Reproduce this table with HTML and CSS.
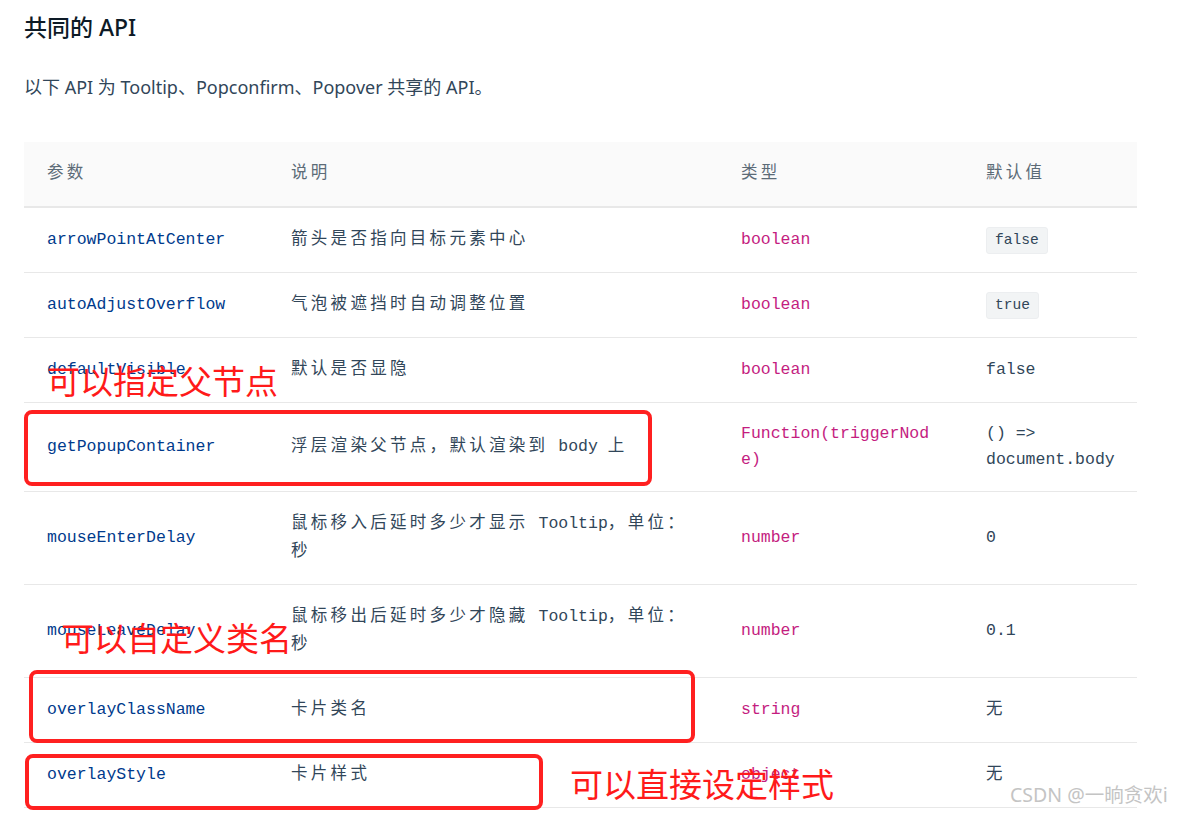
FILE: index.html
```html
<!DOCTYPE html>
<html lang="zh-CN">
<head>
<meta charset="utf-8">
<title>共同的 API</title>
<link rel="stylesheet" href="styles.css">
</head>
<body>
<div class="page">
  <h2 class="title">共同的 API</h2>
  <p class="intro">以下 API 为 Tooltip、Popconfirm、Popover 共享的 API。</p>

  <table class="api">
    <colgroup>
      <col class="c1"><col class="c2"><col class="c3"><col class="c4">
    </colgroup>
    <thead>
      <tr>
        <th><span class="zh">参数</span></th>
        <th><span class="zh">说明</span></th>
        <th><span class="zh">类型</span></th>
        <th><span class="zh">默认值</span></th>
      </tr>
    </thead>
    <tbody>
      <tr>
        <td class="name">arrowPointAtCenter</td>
        <td class="desc"><span class="zh">箭头是否指向目标元素中心</span></td>
        <td class="type">boolean</td>
        <td class="def"><code class="tag">false</code></td>
      </tr>
      <tr>
        <td class="name">autoAdjustOverflow</td>
        <td class="desc"><span class="zh">气泡被遮挡时自动调整位置</span></td>
        <td class="type">boolean</td>
        <td class="def"><code class="tag">true</code></td>
      </tr>
      <tr>
        <td class="name">defaultVisible</td>
        <td class="desc"><span class="zh">默认是否显隐</span></td>
        <td class="type">boolean</td>
        <td class="def">false</td>
      </tr>
      <tr>
        <td class="name">getPopupContainer</td>
        <td class="desc"><span class="zh">浮层渲染父节点，默认渲染到</span> body <span class="zh">上</span></td>
        <td class="type">Function(triggerNode)</td>
        <td class="def">() =&gt; document.body</td>
      </tr>
      <tr>
        <td class="name">mouseEnterDelay</td>
        <td class="desc"><span class="zh">鼠标移入后延时多少才显示</span> Tooltip<span class="zh">，单位：秒</span></td>
        <td class="type">number</td>
        <td class="def">0</td>
      </tr>
      <tr>
        <td class="name">mouseLeaveDelay</td>
        <td class="desc"><span class="zh">鼠标移出后延时多少才隐藏</span> Tooltip<span class="zh">，单位：秒</span></td>
        <td class="type">number</td>
        <td class="def">0.1</td>
      </tr>
      <tr>
        <td class="name">overlayClassName</td>
        <td class="desc"><span class="zh">卡片类名</span></td>
        <td class="type">string</td>
        <td class="def"><span class="zh">无</span></td>
      </tr>
      <tr>
        <td class="name">overlayStyle</td>
        <td class="desc"><span class="zh">卡片样式</span></td>
        <td class="type">object</td>
        <td class="def"><span class="zh">无</span></td>
      </tr>
    </tbody>
  </table>

  <div class="note note-1">可以指定父节点</div>
  <div class="box box-1"></div>
  <div class="note note-2">可以自定义类名</div>
  <div class="box box-2"></div>
  <div class="box box-3"></div>
  <div class="note note-3">可以直接设定样式</div>

  <div class="watermark">CSDN @一晌贪欢i</div>
</div>
</body>
</html>
```

FILE: styles.css
```css
html, body {
  margin: 0;
  padding: 0;
  background: #fff;
}

.page {
  position: relative;
  width: 1181px;
  height: 814px;
  overflow: hidden;
  padding: 10px 0 0 24px;
  box-sizing: border-box;
  font-family: "Noto Sans", "Noto Sans CJK SC", sans-serif;
  color: #314659;
}

.title {
  margin: 0;
  font-size: 23px;
  line-height: 34px;
  font-weight: 500;
  color: #0d1a26;
  font-family: "Noto Sans", "Noto Sans CJK SC", sans-serif;
}

.intro {
  margin: 30px 0 0;
  font-size: 18px;
  line-height: 26px;
  color: #314659;
}

.api {
  margin-top: 42px;
  width: 1113px;
  table-layout: fixed;
  border-collapse: collapse;
  border-spacing: 0;
  font-family: "Liberation Mono", "Noto Sans CJK SC", monospace;
  font-size: 16.5px;
  line-height: 26px;
  color: #314659;
}

.c1 { width: 243px; }
.c2 { width: 450px; }
.c3 { width: 245px; }
.c4 { width: 175px; }

.zh {
  letter-spacing: 3.3px;
  line-height: 28px;
}

.api th {
  height: 65px;
  padding: 0 24px;
  box-sizing: border-box;
  background: #fafafa;
  border-bottom: 2px solid #e8e8e8;
  text-align: left;
  font-weight: normal;
  color: #5c6b77;
  vertical-align: middle;
}

.api td {
  padding: 18px 24px;
  border-bottom: 1px solid #e8e8e8;
  vertical-align: middle;
}

.api th:first-child,
.api td:first-child { padding-left: 23px; }

.name { color: #003a8c; }
.type { color: #c41d7f; word-break: break-all; }
.desc { color: #314659; }
.def { color: #314659; }

.tag {
  display: inline-block;
  font-family: "Liberation Mono", monospace;
  font-size: 14.6px;
  line-height: 21px;
  padding: 2px 8px;
  background: #f2f4f5;
  border: 1px solid #eceef0;
  border-radius: 3px;
  color: #314659;
  vertical-align: middle;
}

/* Red annotations drawn over the screenshot */
.note {
  position: absolute;
  font-family: "Noto Sans CJK SC", sans-serif;
  font-size: 33px;
  line-height: 33px;
  color: #ff1a1a;
  white-space: nowrap;
}
.note-1 { left: 47px; top: 364px; }
.note-2 { left: 61px; top: 621px; }
.note-3 { left: 570px; top: 767px; }

.box {
  position: absolute;
  border: 4px solid #ff2020;
  border-radius: 8px;
  box-sizing: border-box;
}
.box-1 { left: 24px; top: 410px; width: 628px; height: 76px; }
.box-2 { left: 29px; top: 670px; width: 666px; height: 73px; }
.box-3 { left: 25px; top: 754px; width: 518px; height: 56px; }

.watermark {
  position: absolute;
  left: 1010px;
  top: 781px;
  font-family: "Noto Sans", "Noto Sans CJK SC", sans-serif;
  font-size: 19.5px;
  line-height: 28px;
  color: #c4c4c4;
  text-shadow: 0 0 2px #fff;
  white-space: nowrap;
}
```
